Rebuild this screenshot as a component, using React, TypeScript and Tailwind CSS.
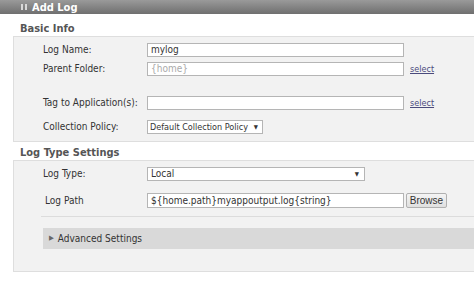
import React from "react";

function Row({ label, children, className = "" }: { label: string; children: React.ReactNode; className?: string }) {
  return (
    <div className={`flex items-center h-[14px] ${className}`}>
      <div className="w-[104px] shrink-0 text-[10px] text-[#333] leading-none whitespace-nowrap">{label}</div>
      {children}
    </div>
  );
}

export default function App() {
  return (
    <div className="w-[474px] h-[289px] bg-white overflow-hidden whitespace-nowrap" style={{ fontFamily: '"DejaVu Sans Condensed", "Noto Sans", sans-serif' }}>
      <div className="h-[14px] bg-gradient-to-b from-[#9a9a9a] to-[#6f6f6f] flex items-center pl-[21px]">
        <span className="flex gap-[2px] mr-[5px]">
          <span className="w-[2px] h-[6px] bg-[#d8d8d8]" />
          <span className="w-[2px] h-[6px] bg-[#d8d8d8]" />
        </span>
        <span className="text-white font-bold text-[11px] leading-none">Add Log</span>
      </div>
      <div className="h-[22px] flex items-end pb-[2px] pl-[20px] text-[11px] font-bold text-[#555] leading-none">Basic Info</div>
      <div className="ml-[13px] h-[106px] bg-[#f2f2f2] border-t border-b border-l border-[#dedede] pl-[29px] pt-[6px]">
        <Row label="Log Name:">
          <div className="w-[257px] h-[14px] bg-white border border-[#b5b5b5] text-[10px] text-[#333] pl-[3px] flex items-center leading-none">mylog</div>
        </Row>
        <Row label="Parent Folder:" className="mt-[5px]">
          <div className="w-[257px] h-[14px] bg-white border border-[#b5b5b5] text-[10px] text-[#aaa] pl-[3px] flex items-center leading-none">{"{home}"}</div>
          <span className="ml-[6px] text-[9px] text-[#4b4b7d] underline leading-none">select</span>
        </Row>
        <Row label="Tag to Application(s):" className="mt-[20px]">
          <div className="w-[257px] h-[14px] bg-white border border-[#b5b5b5]" />
          <span className="ml-[6px] text-[9px] text-[#4b4b7d] underline leading-none">select</span>
        </Row>
        <Row label="Collection Policy:" className="mt-[10px]">
          <div className="w-[116px] h-[14px] bg-white border border-[#b5b5b5] text-[9px] text-[#333] pl-[2px] pr-[4px] flex items-center justify-between leading-none">
            <span>Default Collection Policy</span>
            <span className="text-[6px]">▼</span>
          </div>
        </Row>
      </div>
      <div className="h-[18px] flex items-end pb-[2px] pl-[20px] text-[11px] font-bold text-[#555] leading-none">Log Type Settings</div>
      <div className="ml-[13px] h-[112px] bg-[#f2f2f2] border-t border-b border-l border-[#dedede] pt-[6px]">
        <div className="pl-[29px]">
          <Row label="Log Type:">
            <div className="w-[218px] h-[14px] bg-white border border-[#b5b5b5] text-[10px] text-[#333] pl-[3px] pr-[5px] flex items-center justify-between leading-none">
              <span>Local</span>
              <span className="text-[6px]">▼</span>
            </div>
          </Row>
          <div className="flex items-center h-[15px] mt-[12px]">
            <div className="w-[104px] shrink-0 text-[10px] text-[#333] leading-none pl-[2px]">Log Path</div>
            <div className="w-[257px] h-[15px] bg-white border border-[#b5b5b5] text-[10px] text-[#333] pl-[3px] flex items-center leading-none">{"${home.path}myappoutput.log{string}"}</div>
            <div className="ml-[2px] w-[41px] h-[15px] bg-gradient-to-b from-[#f4f4f4] to-[#e0e0e0] border border-[#b0b0b0] rounded-[2px] text-[10px] text-[#333] flex items-center justify-center leading-none" style={{ fontFamily: '"Liberation Sans", Arial, sans-serif' }}>Browse</div>
          </div>
        </div>
        <div className="ml-[27px] mt-[8px] border-t border-[#dcdcdc]" />
        <div className="ml-[29px] mt-[11px] h-[21px] bg-[#d9d9d9] flex items-center pl-[6px]">
          <span className="text-[7px] text-[#666] mr-[4px]">▶</span>
          <span className="text-[10px] text-[#333] leading-none">Advanced Settings</span>
        </div>
      </div>
    </div>
  );
}
